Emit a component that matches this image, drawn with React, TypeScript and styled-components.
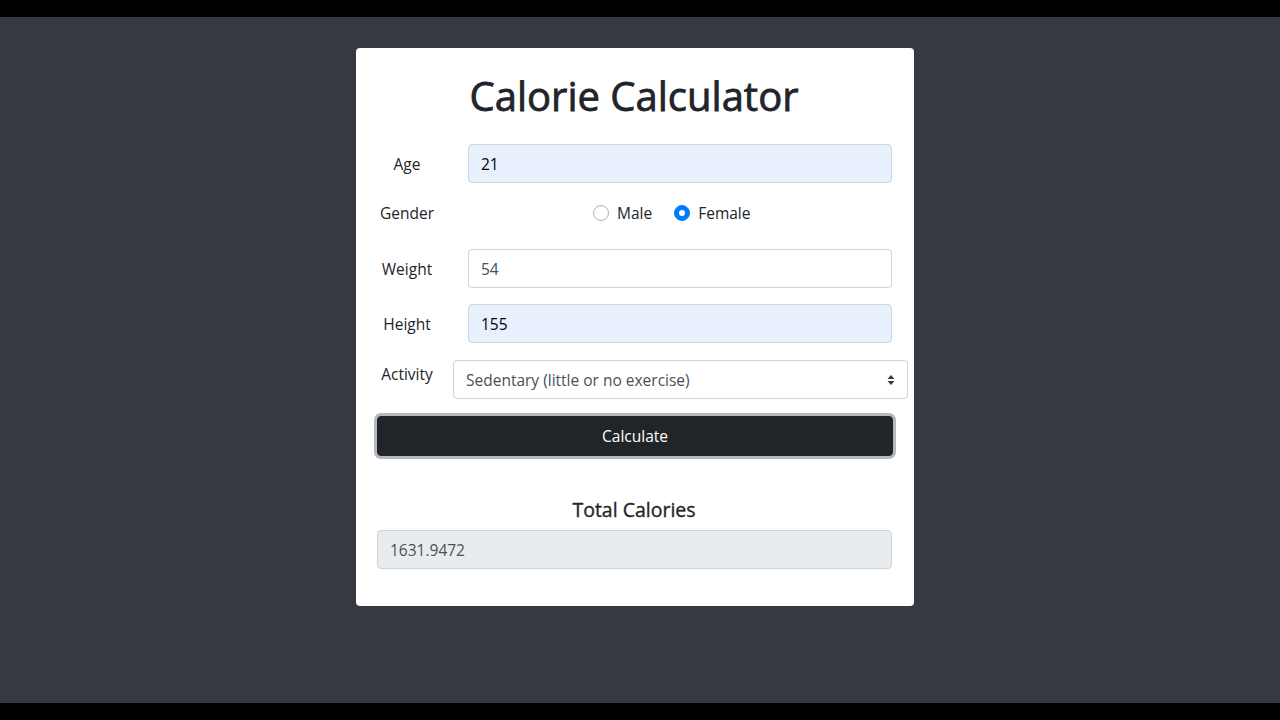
import React, { useState } from 'react';
import styled, { createGlobalStyle } from 'styled-components';

const GlobalStyle = createGlobalStyle`
  html, body {
    margin: 0;
    padding: 0;
    height: 100%;
    background: #000;
  }
  body {
    font-family: "Open Sans", "Noto Sans", "Liberation Sans", sans-serif;
    color: #212529;
  }
  * {
    box-sizing: border-box;
  }
`;

const Page = styled.div`
  display: flex;
  flex-direction: column;
  width: 1280px;
  height: 720px;
  background: #000;
`;

const Letterbox = styled.div`
  height: 17px;
  flex-shrink: 0;
  background: #000;
`;

const Stage = styled.main`
  flex: 1;
  display: flex;
  justify-content: center;
  align-items: flex-start;
  padding: 31px 10px 0 0;
  background: #343a40;
`;

const Card = styled.div`
  width: 558px;
  background: #fff;
  border-radius: 4px;
  padding: 20px 22px 37px 20px;
`;

const Title = styled.h1`
  margin: 4px 0 24px;
  height: 48px;
  font-size: 40px;
  line-height: 48px;
  font-weight: 400;
  -webkit-text-stroke: 0.8px #212529;
  text-align: center;
`;

const Row = styled.div<{ $gap?: number; $mb?: number; $h?: number }>`
  display: flex;
  align-items: center;
  gap: ${p => p.$gap ?? 30}px;
  margin-bottom: ${p => p.$mb ?? 16}px;
  min-height: ${p => p.$h ?? 39}px;
`;

const Label = styled.label<{ $top?: boolean }>`
  width: 62px;
  flex-shrink: 0;
  text-align: center;
  font-size: 15.5px;
  align-self: ${p => (p.$top ? 'flex-start' : 'center')};
  padding-top: ${p => (p.$top ? 3 : 0)}px;
`;

const Input = styled.input<{ $filled?: boolean }>`
  width: 424px;
  height: 39px;
  padding: 0 12px;
  font-family: inherit;
  font-size: 15.5px;
  color: ${p => (p.$filled ? '#000' : '#495057')};
  background: ${p => (p.$filled ? '#e8f0fe' : '#fff')};
  border: 1px solid #ced4da;
  border-radius: 4px;
  outline: none;
`;

const Radios = styled.div`
  display: flex;
  align-items: center;
  gap: 22px;
  margin-left: 125px;
`;

const RadioLabel = styled.label`
  display: flex;
  align-items: center;
  gap: 8px;
  font-size: 15.5px;
`;

const Radio = styled.input.attrs({ type: 'radio' })`
  appearance: none;
  margin: 0;
  width: 16px;
  height: 16px;
  border-radius: 50%;
  border: 1px solid #adb5bd;
  background: #fff;
  display: grid;
  place-items: center;
  &:checked {
    background: #007bff;
    border-color: #007bff;
  }
  &:checked::after {
    content: '';
    width: 6px;
    height: 6px;
    border-radius: 50%;
    background: #fff;
  }
`;

const SelectWrap = styled.div`
  position: relative;
  width: 455px;
  margin-right: -16px;
`;

const Select = styled.select`
  appearance: none;
  width: 100%;
  height: 39px;
  padding: 0 32px 0 12px;
  font-family: inherit;
  font-size: 15.5px;
  color: #495057;
  background: #fff;
  border: 1px solid #ced4da;
  border-radius: 4px;
  outline: none;
`;

const Arrows = styled.svg`
  position: absolute;
  right: 13px;
  top: 14px;
  pointer-events: none;
`;

const Button = styled.button`
  display: block;
  width: 516px;
  height: 40px;
  margin: 0 0 0 1px;
  font-family: inherit;
  font-size: 15.5px;
  color: #fff;
  background: #212529;
  border: 1px solid #212529;
  border-radius: 4px;
  box-shadow: 0 0 0 3px rgba(130, 138, 145, 0.6);
`;

const Result = styled.section`
  margin-top: 42px;
  display: flex;
  flex-direction: column;
  align-items: center;
`;

const ResultTitle = styled.h5`
  margin: 0 0 8px;
  font-size: 19.5px;
  line-height: 24px;
  font-weight: 400;
  -webkit-text-stroke: 0.35px #212529;
`;

const ResultField = styled.input`
  width: 515px;
  height: 39px;
  margin-left: 1px;
  padding: 0 12px;
  font-family: inherit;
  font-size: 15.5px;
  color: #495057;
  background: #e9ecef;
  border: 1px solid #ced4da;
  border-radius: 4px;
  outline: none;
`;

export default function App() {
  const [gender, setGender] = useState('female');

  return (
    <>
      <GlobalStyle />
      <Page>
        <Letterbox />
        <Stage>
          <Card>
            <Title>Calorie Calculator</Title>
            <Row $mb={14}>
              <Label>Age</Label>
              <Input $filled defaultValue="21" />
            </Row>
            <Row $h={32} $mb={20}>
              <Label>Gender</Label>
              <Radios>
                <RadioLabel>
                  <Radio name="gender" checked={gender === 'male'} onChange={() => setGender('male')} />
                  Male
                </RadioLabel>
                <RadioLabel>
                  <Radio name="gender" checked={gender === 'female'} onChange={() => setGender('female')} />
                  Female
                </RadioLabel>
              </Radios>
            </Row>
            <Row>
              <Label>Weight</Label>
              <Input defaultValue="54" />
            </Row>
            <Row $mb={17}>
              <Label>Height</Label>
              <Input $filled defaultValue="155" />
            </Row>
            <Row $gap={15} $mb={17}>
              <Label $top>Activity</Label>
              <SelectWrap>
                <Select defaultValue="sedentary">
                  <option value="sedentary">Sedentary (little or no exercise)</option>
                  <option value="light">Lightly active</option>
                  <option value="moderate">Moderately active</option>
                  <option value="very">Very active</option>
                </Select>
                <Arrows width="8" height="12" viewBox="0 0 8 12">
                  <path d="M4 1 L7.5 5 H0.5 Z M4 11 L0.5 7 H7.5 Z" fill="#343a40" />
                </Arrows>
              </SelectWrap>
            </Row>
            <Button>Calculate</Button>
            <Result>
              <ResultTitle>Total Calories</ResultTitle>
              <ResultField readOnly value="1631.9472" />
            </Result>
          </Card>
        </Stage>
        <Letterbox />
      </Page>
    </>
  );
}
